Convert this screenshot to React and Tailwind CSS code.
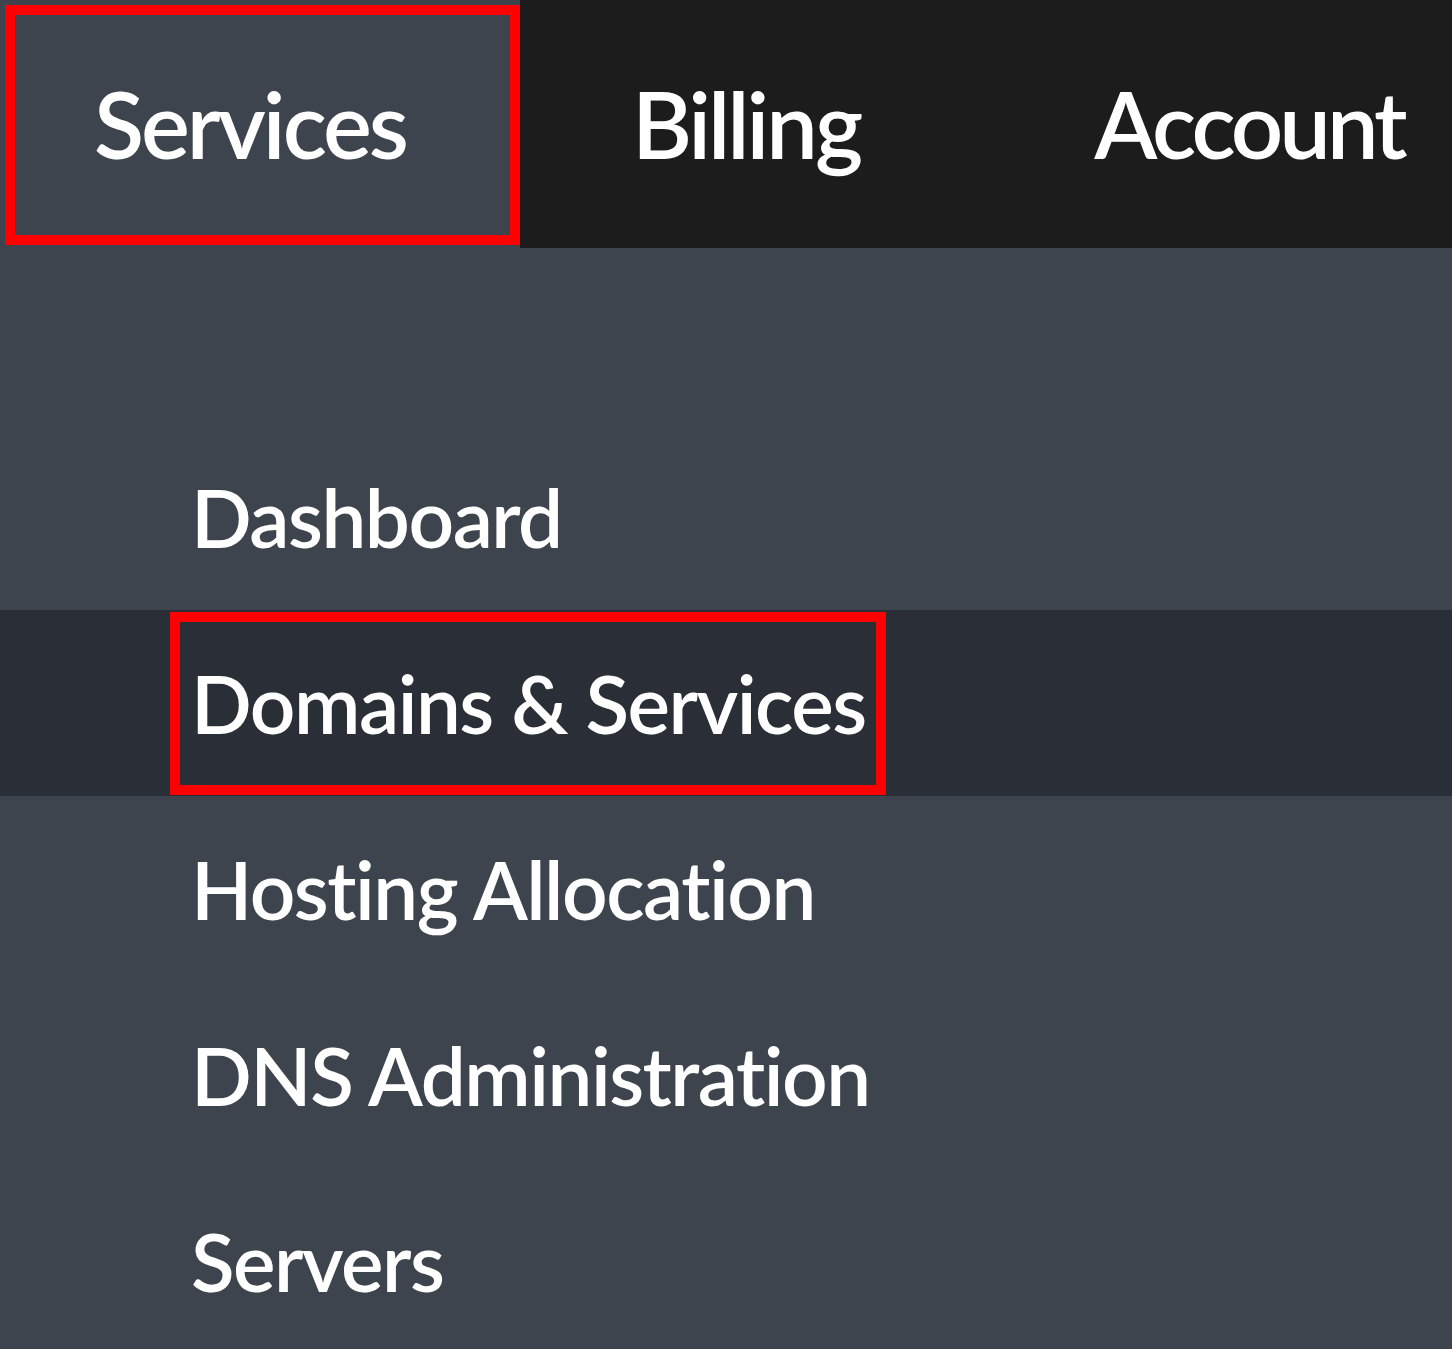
import React from 'react';

const items = ['Dashboard', 'Domains & Services', 'Hosting Allocation', 'DNS Administration', 'Servers'];

export default function App() {
  return (
    <div className="w-[1452px] h-[1349px] overflow-hidden bg-[#3e444d] text-white" style={{ fontFamily: 'Lato, "Noto Sans", sans-serif' }}>
      <div className="flex h-[248px] bg-[#1c1c1c] text-[92px] font-semibold tracking-[-3px]">
        <div className="relative w-[520px] bg-[#3e444d] flex items-center pl-[94px]">
          <span>Services</span>
          <div className="absolute left-[5px] top-[5px] w-[515px] h-[240px] border-[10px] border-[#ff0000]" />
        </div>
        <div className="flex items-center pl-[112px]">Billing</div>
        <div className="flex items-center pl-[234px] tracking-[-4px]">Account</div>
      </div>
      <div className="pt-[176px] text-[80px] font-semibold tracking-[-1.5px]">
        {items.map((label, i) => (
          <div key={label} className={`relative h-[186px] flex items-center pl-[191px] ${i === 1 ? 'bg-[#2a2e36]' : ''}`}>
            <span>{label}</span>
            {i === 1 && <div className="absolute left-[170px] w-[716px] top-[2px] bottom-[1px] border-[10px] border-[#ff0000]" />}
          </div>
        ))}
      </div>
    </div>
  );
}
